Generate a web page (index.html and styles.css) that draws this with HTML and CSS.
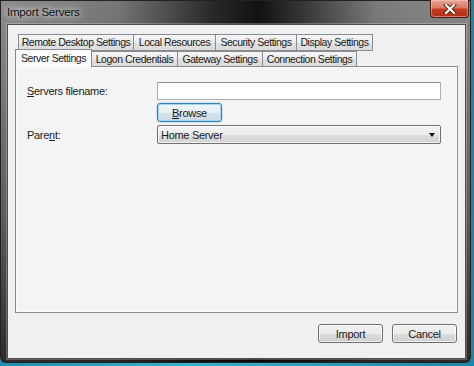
FILE: index.html
```html
<!DOCTYPE html>
<html lang="en">
<head>
    <meta charset="UTF-8">
    <title>Import Servers</title>
    <link rel="stylesheet" href="styles.css">
</head>
<body>
    <div class="window">
        <div class="titlebar">
            <span class="title">Import Servers</span>
            <button class="close-btn" aria-label="Close">
                <svg width="14" height="10" viewBox="0 0 14 10">
                    <path d="M3 1 L11 9 M11 1 L3 9" stroke="#5a1a10" stroke-width="4" stroke-linecap="square"/>
                    <path d="M3 1 L11 9 M11 1 L3 9" stroke="#ffffff" stroke-width="2.2" stroke-linecap="square"/>
                </svg>
            </button>
        </div>

        <div class="client">
            <div class="tabstrip">
                <div class="tabrow tabrow-back">
                    <div class="tab tab-remote">Remote Desktop Settings</div>
                    <div class="tab tab-local">Local Resources</div>
                    <div class="tab tab-security">Security Settings</div>
                    <div class="tab tab-display">Display Settings</div>
                </div>
                <div class="tabrow tabrow-front">
                    <div class="tab tab-active">Server Settings</div>
                    <div class="tab tab-logon">Logon Credentials</div>
                    <div class="tab tab-gateway">Gateway Settings</div>
                    <div class="tab tab-connection">Connection Settings</div>
                </div>
            </div>

            <div class="panel">
                <div class="form-grid">
                    <label class="field-label" for="serversFile"><u>S</u>ervers filename:</label>
                    <input class="text-input" type="text" id="serversFile">

                    <span></span>
                    <button class="btn btn-default"><u>B</u>rowse</button>

                    <label class="field-label" for="parent">Pare<u>n</u>t:</label>
                    <div class="combo" id="parent">
                        <span>Home Server</span>
                        <span class="combo-arrow"></span>
                    </div>
                </div>
            </div>

            <div class="actions">
                <button class="btn">Import</button>
                <button class="btn">Cancel</button>
            </div>
        </div>
    </div>
</body>
</html>
```

FILE: styles.css
```css
body {
    margin: 0;
    width: 474px;
    height: 366px;
    overflow: hidden;
    background: linear-gradient(to right, #1f8fb0, #35b2d2 40%, #1d86a8);
    font-family: "Liberation Sans", Arial, sans-serif;
    font-size: 11px;
    letter-spacing: -0.3px;
    color: #1a1a1a;
}

.window {
    width: 471px;
    height: 363px;
    box-sizing: border-box;
    padding: 0 5px 4px 7px;
    display: flex;
    flex-direction: column;
    border-radius: 0 0 6px 6px;
    background:
        linear-gradient(to bottom, rgba(0, 0, 0, 0) 0, rgba(0, 0, 0, 0.35) 60%, rgba(0, 0, 0, 0.7) 100%),
        linear-gradient(to right, #8e8e8e 0%, #777 25%, #2a2a2a 45%, #121212 55%, #3a3a3a 65%, #7c7c7c 80%, #8a8a8a 100%);
    box-shadow: inset 0 0 0 1px #222;
}

.titlebar {
    height: 24px;
    display: flex;
    justify-content: space-between;
    align-items: flex-start;
    margin-right: -3px;
}

.title {
    margin-top: 6px;
    font-size: 11.5px;
    letter-spacing: -0.2px;
    color: #111;
    text-shadow: 0 0 6px rgba(255, 255, 255, 0.9), 0 0 10px rgba(255, 255, 255, 0.6);
}

.close-btn {
    width: 39px;
    height: 18px;
    padding: 0;
    border: 1px solid #4a1c14;
    border-top: none;
    border-radius: 0 0 4px 4px;
    background: linear-gradient(to bottom, #e8a898 0%, #d87a64 45%, #c23c22 55%, #b02e18 100%);
    box-shadow: inset 0 0 0 1px rgba(255, 200, 190, 0.5);
    display: flex;
    align-items: center;
    justify-content: center;
}

.client {
    flex: 1;
    display: flex;
    flex-direction: column;
    background-color: #f0f0f0;
    border: 1px solid #4e4e4e;
    box-shadow: 0 0 0 1px rgba(255, 255, 255, 0.25);
    padding: 9px 7px 15px 7px;
}

.tabstrip {
    height: 32px;
    display: flex;
    flex-direction: column;
    position: relative;
    z-index: 1;
}

.tabrow {
    display: flex;
}

.tabrow-back {
    height: 17px;
    padding-left: 3px;
}

.tabrow-front {
    height: 15px;
}

.tab {
    box-sizing: border-box;
    margin-right: -1px;
    border: 1px solid #898c95;
    border-bottom: none;
    background: linear-gradient(to bottom, #f6f6f6, #ebebeb 50%, #e0e0e0 51%, #dcdcdc);
    font-size: 10.5px;
    letter-spacing: -0.45px;
    line-height: 14px;
    text-align: center;
    white-space: nowrap;
}

.tabrow-back .tab {
    border-bottom: 1px solid #898c95;
    line-height: 15px;
}

.tab-remote { width: 116px; }
.tab-local { width: 83px; }
.tab-security { width: 82px; }
.tab-display { width: 77px; }
.tab-logon { width: 87px; }
.tab-gateway { width: 86px; }
.tab-connection { width: 95px; }

.tab-active {
    width: 77px;
    height: 18px;
    margin-top: -2px;
    padding-top: 1px;
    background: #fbfbfb;
    position: relative;
    z-index: 2;
}

.panel {
    flex: 1;
    border: 1px solid #898c95;
    background-color: #f4f4f4;
    box-shadow: inset 0 0 0 1px #fbfbfb;
    padding: 15px 15px 0 11px;
}

.form-grid {
    display: grid;
    grid-template-columns: 130px 284px;
    grid-template-rows: 18px 19px 19px;
    row-gap: 3px;
    align-items: center;
}

.field-label {
    color: #222;
}

.text-input {
    height: 18px;
    box-sizing: border-box;
    border: 1px solid #abadb3;
    border-top-color: #8e9199;
    border-radius: 1px;
    background: #fff;
    padding: 0 3px;
}

.btn {
    box-sizing: border-box;
    width: 65px;
    height: 19px;
    padding: 0;
    font-family: inherit;
    font-size: inherit;
    letter-spacing: inherit;
    color: #1a1a1a;
    border: 1px solid #707070;
    border-radius: 3px;
    background: linear-gradient(to bottom, #f2f2f2 0%, #ebebeb 50%, #dddddd 51%, #cfcfcf 100%);
    box-shadow: inset 0 0 0 1px rgba(255, 255, 255, 0.7);
}

.btn-default {
    border-color: #3c7fb1;
    background: linear-gradient(to bottom, #eef6fb 0%, #e6eff5 50%, #d6e3ec 51%, #cbdbe6 100%);
    box-shadow: inset 0 0 0 1px #9fd5f5, 0 0 2px rgba(60, 160, 230, 0.6);
}

.combo {
    height: 19px;
    box-sizing: border-box;
    display: flex;
    align-items: center;
    justify-content: space-between;
    padding: 0 5px 0 3px;
    border: 1px solid #707070;
    border-radius: 2px;
    background: linear-gradient(to bottom, #f4f4f4 0%, #ececec 50%, #dedede 51%, #d2d2d2 100%);
    box-shadow: inset 0 0 0 1px rgba(255, 255, 255, 0.7);
}

.combo-arrow {
    width: 0;
    height: 0;
    border-left: 3.5px solid transparent;
    border-right: 3.5px solid transparent;
    border-top: 4px solid #111;
}

.actions {
    margin-top: 11px;
    display: flex;
    justify-content: flex-end;
    gap: 9px;
    padding-right: 1px;
}
```
